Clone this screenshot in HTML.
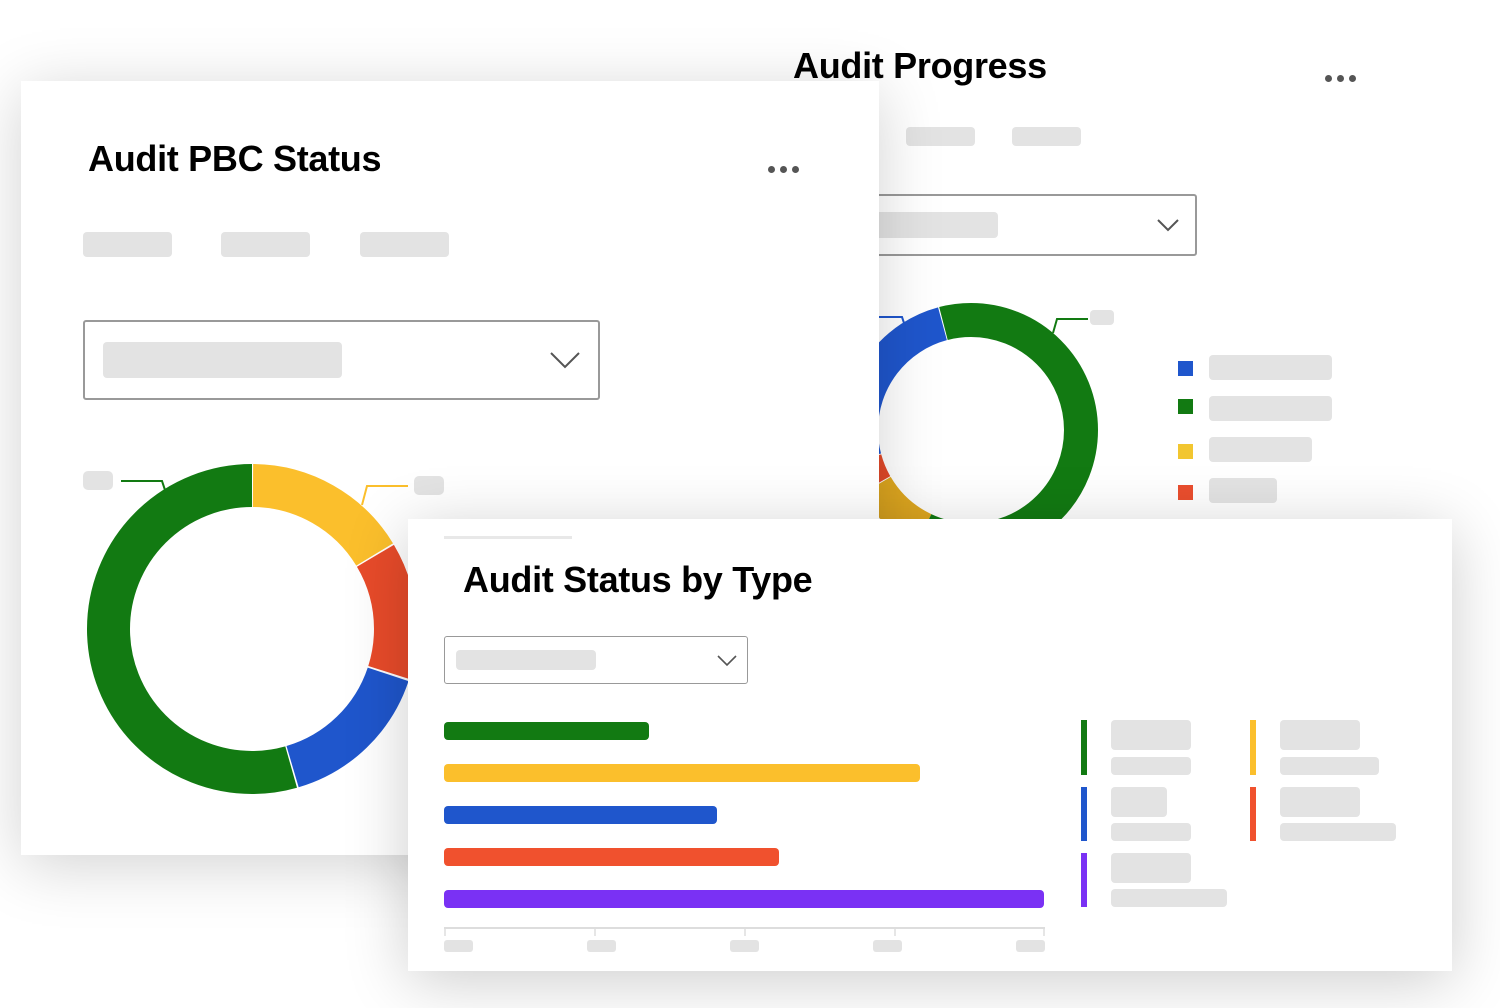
<!DOCTYPE html>
<html><head><meta charset="utf-8"><style>
*{margin:0;padding:0;box-sizing:border-box}
body{width:1500px;height:1008px;background:#fff;position:relative;overflow:hidden;font-family:"Liberation Sans",sans-serif}
.abs{position:absolute}
.pill{position:absolute;background:#e3e3e3;border-radius:4px}
.card{position:absolute;background:#fff}
h1{position:absolute;font-size:36px;font-weight:bold;color:#000;white-space:nowrap;letter-spacing:-0.3px;line-height:1}
.dots{position:absolute;display:flex;gap:5px}
.dots i{display:block;width:7px;height:7px;border-radius:50%;background:#555}
.dd{position:absolute;border:2px solid #999;border-radius:3px;background:#fff}
</style></head><body>

<!-- back card: Audit Progress -->
<h1 style="left:793px;top:48px">Audit Progress</h1>
<div class="dots" style="left:1325px;top:75px"><i></i><i></i><i></i></div>
<div class="pill" style="left:906px;top:127px;width:69px;height:19px"></div>
<div class="pill" style="left:1012px;top:127px;width:69px;height:19px"></div>
<div class="dd" style="left:800px;top:194px;width:397px;height:62px"></div>
<div class="pill" style="left:820px;top:212px;width:178px;height:26px"></div>
<svg class="abs" style="left:1155px;top:215px" width="28" height="20"><path d="M3 5 L13 15 L23 5" fill="none" stroke="#555" stroke-width="2"/></svg>
<svg class="abs" style="left:0;top:0" width="1500" height="1008">
 <g transform="rotate(-90 971 430)" fill="none" stroke-width="34">
  <circle cx="971" cy="430" r="110" stroke="#127a12" stroke-dasharray="394 1000" stroke-dashoffset="0"/>
  <circle cx="971" cy="430" r="110" stroke="#127a12" stroke-dasharray="30 1000" stroke-dashoffset="-663"/>
  <circle cx="971" cy="430" r="110" stroke="#e0a820" stroke-dasharray="66 1000" stroke-dashoffset="-394"/>
  <circle cx="971" cy="430" r="110" stroke="#e24a2a" stroke-dasharray="28 1000" stroke-dashoffset="-461"/>
  <circle cx="971" cy="430" r="110" stroke="#1f56cc" stroke-dasharray="172 1000" stroke-dashoffset="-490"/>
 </g>
 <path d="M1088 319 H1057 L1053 333" fill="none" stroke="#127a12" stroke-width="2"/>
 <path d="M879 317 H902 L905 326" fill="none" stroke="#1f56cc" stroke-width="2"/>
 <rect x="1090" y="310" width="24" height="15" rx="4" fill="#e3e3e3"/>
 <rect x="1178" y="361" width="15" height="15" fill="#1f56cc"/>
 <rect x="1178" y="399" width="15" height="15" fill="#127a12"/>
 <rect x="1178" y="444" width="15" height="15" fill="#f2c630"/>
 <rect x="1178" y="485" width="15" height="15" fill="#ea4e2e"/>
 <rect x="1209" y="355" width="123" height="25" rx="4" fill="#e3e3e3"/>
 <rect x="1209" y="396" width="123" height="25" rx="4" fill="#e3e3e3"/>
 <rect x="1209" y="437" width="103" height="25" rx="4" fill="#e3e3e3"/>
 <rect x="1209" y="478" width="68" height="25" rx="4" fill="#e3e3e3"/>
</svg>

<!-- PBC card -->
<div class="card" style="left:21px;top:81px;width:858px;height:774px;box-shadow:0 10px 60px rgba(0,0,0,.18)"></div>
<h1 style="left:88px;top:141px">Audit PBC Status</h1>
<div class="dots" style="left:768px;top:166px"><i></i><i></i><i></i></div>
<div class="pill" style="left:83px;top:232px;width:89px;height:25px"></div>
<div class="pill" style="left:221px;top:232px;width:89px;height:25px"></div>
<div class="pill" style="left:360px;top:232px;width:89px;height:25px"></div>
<div class="dd" style="left:83px;top:320px;width:517px;height:80px"></div>
<div class="pill" style="left:103px;top:342px;width:239px;height:36px"></div>
<svg class="abs" style="left:548px;top:348px" width="34" height="24"><path d="M3 5 L17 19 L31 5" fill="none" stroke="#555" stroke-width="2"/></svg>
<svg class="abs" style="left:0;top:0" width="880" height="1008">
 <g transform="rotate(-90 252 629)" fill="none" stroke-width="43">
  <circle cx="252" cy="629" r="143.5" stroke="#127a12" stroke-dasharray="490.5 2000" stroke-dashoffset="-411"/>
  <circle cx="252" cy="629" r="143.5" stroke="#fbbf2c" stroke-dasharray="146 2000" stroke-dashoffset="-1"/>
  <circle cx="252" cy="629" r="143.5" stroke="#e84b2a" stroke-dasharray="121 2000" stroke-dashoffset="-148.5"/>
  <circle cx="252" cy="629" r="143.5" stroke="#1f56cc" stroke-dasharray="138 2000" stroke-dashoffset="-271.5"/>
 </g>
 <path d="M121 481 H162 L165 490" fill="none" stroke="#127a12" stroke-width="2"/>
 <path d="M408 486 H367 L362 505" fill="none" stroke="#fbbf2c" stroke-width="2"/>
 <rect x="83" y="471" width="30" height="19" rx="5" fill="#e3e3e3"/>
 <rect x="414" y="476" width="30" height="19" rx="5" fill="#e3e3e3"/>
</svg>

<!-- Status by type card -->
<div class="card" style="left:408px;top:519px;width:1044px;height:452px;box-shadow:0 10px 60px rgba(0,0,0,.2)"></div>
<div class="abs" style="left:444px;top:536px;width:128px;height:3px;background:#e8e8e8"></div>
<h1 style="left:463px;top:562px">Audit Status by Type</h1>
<div class="dd" style="left:444px;top:636px;width:304px;height:48px;border-width:1.5px"></div>
<div class="pill" style="left:456px;top:650px;width:140px;height:20px"></div>
<svg class="abs" style="left:716px;top:652px" width="22" height="16"><path d="M2 4 L11 13 L20 4" fill="none" stroke="#555" stroke-width="1.6"/></svg>
<svg class="abs" style="left:0;top:0" width="1500" height="1008">
 <rect x="444" y="722" width="205" height="18" rx="4" fill="#127a12"/>
 <rect x="444" y="764" width="476" height="18" rx="4" fill="#fbbf2c"/>
 <rect x="444" y="806" width="273" height="18" rx="4" fill="#1f56cc"/>
 <rect x="444" y="848" width="335" height="18" rx="4" fill="#f0512e"/>
 <rect x="444" y="890" width="600" height="18" rx="4" fill="#7a31f4"/>
 <line x1="444" y1="928" x2="1045" y2="928" stroke="#ddd" stroke-width="2"/>
 <g stroke="#ddd" stroke-width="1.5"><line x1="445" y1="928" x2="445" y2="936"/><line x1="595" y1="928" x2="595" y2="936"/><line x1="745" y1="928" x2="745" y2="936"/><line x1="895" y1="928" x2="895" y2="936"/><line x1="1044" y1="928" x2="1044" y2="936"/></g>
 <g fill="#e3e3e3"><rect x="444" y="940" width="29" height="12" rx="3"/><rect x="587" y="940" width="29" height="12" rx="3"/><rect x="730" y="940" width="29" height="12" rx="3"/><rect x="873" y="940" width="29" height="12" rx="3"/><rect x="1016" y="940" width="29" height="12" rx="3"/></g>
 <rect x="1081" y="720" width="6" height="55" fill="#127a12"/>
 <rect x="1081" y="787" width="6" height="54" fill="#1f56cc"/>
 <rect x="1081" y="853" width="6" height="54" fill="#7a31f4"/>
 <rect x="1250" y="720" width="6" height="55" fill="#fbbf2c"/>
 <rect x="1250" y="787" width="6" height="54" fill="#f0512e"/>
 <g fill="#e3e3e3">
  <rect x="1111" y="720" width="80" height="30" rx="4"/><rect x="1111" y="757" width="80" height="18" rx="4"/>
  <rect x="1111" y="787" width="56" height="30" rx="4"/><rect x="1111" y="823" width="80" height="18" rx="4"/>
  <rect x="1111" y="853" width="80" height="30" rx="4"/><rect x="1111" y="889" width="116" height="18" rx="4"/>
  <rect x="1280" y="720" width="80" height="30" rx="4"/><rect x="1280" y="757" width="99" height="18" rx="4"/>
  <rect x="1280" y="787" width="80" height="30" rx="4"/><rect x="1280" y="823" width="116" height="18" rx="4"/>
 </g>
</svg>
</body></html>
